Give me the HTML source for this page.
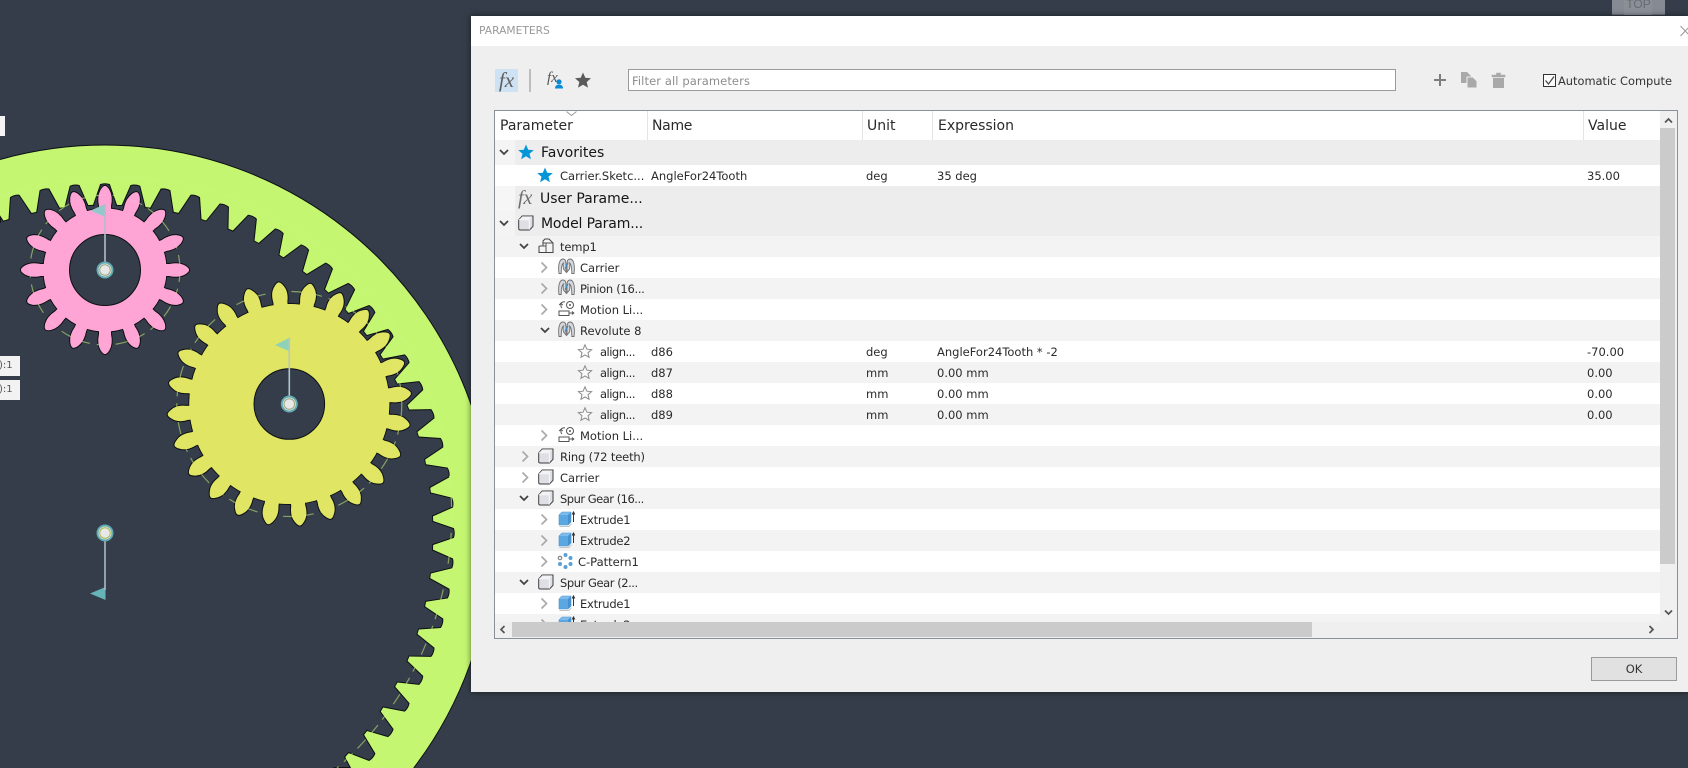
<!DOCTYPE html>
<html><head><meta charset="utf-8"><title>Parameters</title>
<style>
html,body{margin:0;padding:0;width:1688px;height:768px;overflow:hidden;background:#343d49}
body{position:relative;font-family:"DejaVu Sans","Liberation Sans",sans-serif;color:#2a2a2a}
.a{position:absolute}
#scene{position:absolute;left:0;top:0}
.lab{position:absolute;background:#f2f2f2;color:#555;font-size:10px;line-height:20px;white-space:nowrap;overflow:hidden}
#dlg{position:absolute;left:471px;top:16px;width:1217px;height:676px;background:#efefef;box-shadow:0 0 6px rgba(0,0,0,.55)}
#title{position:absolute;left:0;top:0;width:100%;height:30px;background:#fff}
.abs{position:absolute}
.r{position:absolute;left:495px;width:1165px;height:21px}
.w{background:#fff}.g{background:#f3f3f3}.h{background:#ededed;left:515px;width:1145px}
.t{position:absolute;font-size:11.5px;line-height:21px;white-space:nowrap;color:#2a2a2a;margin-top:1px}
.b{font-size:14px;line-height:25px;color:#151515;margin-top:1px}
.hd{position:absolute;font-size:14px;line-height:29px;top:112px;color:#2a2a2a}
.sep{position:absolute;top:111px;width:1px;height:29px;background:#e4e4e4}
.i{position:absolute;overflow:visible}
.dl{mix-blend-mode:lighten}
</style></head><body>

<svg id="scene" width="1688" height="768" viewBox="0 0 1688 768">
<defs>
<path id="n" d="M318,-13 L328,-11.5 L348.5,-4.5 Q350,0 348.5,4.5 L328,11.5 L318,13Z" fill="#343d49" stroke="#0c0f12" stroke-width="1"/>
<g id="n6"><use href="#n"/><use href="#n" transform="rotate(5)"/><use href="#n" transform="rotate(10)"/><use href="#n" transform="rotate(15)"/><use href="#n" transform="rotate(20)"/><use href="#n" transform="rotate(25)"/></g>
<path id="pt" d="M58,-6.5 L64,-6.5 C70,-7.8 76,-7.4 80.5,-4.8 Q84.6,-2.2 84.6,0 Q84.6,2.2 80.5,4.8 C76,7.4 70,7.8 64,6.5 L58,6.5Z" fill="#ffa5d6" stroke="#0c0f12" stroke-width="1"/>
<path id="yt" d="M95,-7.5 L102,-7.5 C108,-8.8 114,-8.4 118.5,-5 Q122.6,-2.2 122.6,0 Q122.6,2.2 118.5,5 C114,8.4 108,8.8 102,7.5 L95,7.5Z" fill="#e0e563" stroke="#0c0f12" stroke-width="1"/>
</defs>

<!-- ring gear -->
<g transform="translate(105 533)">
<path d="M-105,-373.5 A388 388 0 0 1 308.7,235 L-105,235Z" fill="#c4f672"/>
<path d="M-105,-373.5 A388 388 0 0 1 308.7,235" fill="none" stroke="#0c0f12" stroke-width="1"/>
<path d="M-105,-310.7 A328 328 0 0 1 228.8,235 L-105,235Z" fill="#343d49" stroke="none"/>
<path d="M-105,-310.7 A328 328 0 0 1 228.8,235" fill="none" stroke="#0c0f12" stroke-width="1"/>
<use href="#n6" transform="rotate(-105)"/><use href="#n6" transform="rotate(-75)"/><use href="#n6" transform="rotate(-45)"/><use href="#n6" transform="rotate(-15)"/><use href="#n6" transform="rotate(15)"/>
<path d="M234,215.7 L239.7,224.1 L245.3,234.6 L217.2,234.6 L215.7,234Z" fill="#343d49" stroke="#0c0f12" stroke-width="1"/>
<path d="M-104.6,-316.1 L-101.9,-312.1 L-96.6,-303.3 L-104.6,-303.3Z" fill="#343d49" stroke="#0c0f12" stroke-width="1"/>
<path d="M-105,-310.1 A327.4 327.4 0 0 1 228,235 L-105,235Z" fill="#343d49"/>
</g>

<!-- pink pinion -->
<g transform="translate(105 270)">
<circle r="62" fill="#ffa5d6" stroke="#0c0f12" stroke-width="1"/>
<use href="#pt"/><use href="#pt" transform="rotate(22.5)"/><use href="#pt" transform="rotate(45)"/><use href="#pt" transform="rotate(67.5)"/><use href="#pt" transform="rotate(90)"/><use href="#pt" transform="rotate(112.5)"/><use href="#pt" transform="rotate(135)"/><use href="#pt" transform="rotate(157.5)"/><use href="#pt" transform="rotate(180)"/><use href="#pt" transform="rotate(202.5)"/><use href="#pt" transform="rotate(225)"/><use href="#pt" transform="rotate(247.5)"/><use href="#pt" transform="rotate(270)"/><use href="#pt" transform="rotate(292.5)"/><use href="#pt" transform="rotate(315)"/><use href="#pt" transform="rotate(337.5)"/>
<circle r="61.5" fill="#ffa5d6"/>
<circle r="35.5" fill="#343d49" stroke="#0c0f12" stroke-width="1"/>
</g>

<!-- yellow planet -->
<g transform="translate(289.3 404)">
<circle r="100.5" fill="#e0e563" stroke="#0c0f12" stroke-width="1"/>
<g transform="rotate(10)">
<use href="#yt"/><use href="#yt" transform="rotate(15)"/><use href="#yt" transform="rotate(30)"/><use href="#yt" transform="rotate(45)"/><use href="#yt" transform="rotate(60)"/><use href="#yt" transform="rotate(75)"/><use href="#yt" transform="rotate(90)"/><use href="#yt" transform="rotate(105)"/><use href="#yt" transform="rotate(120)"/><use href="#yt" transform="rotate(135)"/><use href="#yt" transform="rotate(150)"/><use href="#yt" transform="rotate(165)"/><use href="#yt" transform="rotate(180)"/><use href="#yt" transform="rotate(195)"/><use href="#yt" transform="rotate(210)"/><use href="#yt" transform="rotate(225)"/><use href="#yt" transform="rotate(240)"/><use href="#yt" transform="rotate(255)"/><use href="#yt" transform="rotate(270)"/><use href="#yt" transform="rotate(285)"/><use href="#yt" transform="rotate(300)"/><use href="#yt" transform="rotate(315)"/><use href="#yt" transform="rotate(330)"/><use href="#yt" transform="rotate(345)"/>
</g>
<circle r="100" fill="#e0e563"/>
<circle r="35.3" fill="#343d49" stroke="#0c0f12" stroke-width="1"/>
</g>

<!-- dashed pitch circles -->
<g fill="none" stroke-width="1.2" stroke-dasharray="12 7">
<g class="dl" stroke="#7d9a58">
<path d="M0,196.9 A337.5 337.5 0 0 1 337,768"/>
<circle cx="105" cy="270" r="75"/>
<circle cx="289.3" cy="404" r="112.5"/>
</g>
<g stroke="#fff" stroke-opacity=".07">
<path d="M0,196.9 A337.5 337.5 0 0 1 337,768"/>
<circle cx="105" cy="270" r="75"/>
<circle cx="289.3" cy="404" r="112.5"/>
</g>
</g>

<!-- joint glyphs -->
<g>
<path d="M90.5,210.5 L105.5,204 V217Z" fill="#92c7cc"/>
<line x1="105" y1="262" x2="105" y2="205" stroke="#aebfca" stroke-width="1.6"/>
<circle cx="105" cy="270" r="7.5" fill="#e8e8e8" stroke="#62abb2" stroke-width="2"/>
<circle cx="105" cy="270" r="5.3" fill="#e8e8e8" stroke="#9aa77c" stroke-width="1"/>

<path d="M275,345 L290,337.5 V351.5Z" fill="#8fd2b8"/>
<line x1="289.3" y1="396" x2="289.3" y2="338" stroke="#b5c7c9" stroke-width="1.6"/>
<circle cx="289.3" cy="404" r="7.5" fill="#e8e8e8" stroke="#62abb2" stroke-width="2"/>
<circle cx="289.3" cy="404" r="5.3" fill="#e8e8e8" stroke="#9aa77c" stroke-width="1"/>

<path d="M90,593.5 L105.5,587 V600Z" fill="#67b4b8"/>
<line x1="105" y1="541" x2="105" y2="590" stroke="#a9bcc7" stroke-width="1.6"/>
<circle cx="105" cy="533" r="7.5" fill="#e8e8e8" stroke="#62abb2" stroke-width="2"/>
<circle cx="105" cy="533" r="5.3" fill="#e8e8e8" stroke="#a4b84c" stroke-width="1"/>
</g>

<!-- view cube -->
<rect x="1612" y="0" width="53" height="15" fill="#868b93"/>
<rect x="1612" y="14" width="53" height="1" fill="#6f747c"/>
<rect x="1624" y="0" width="28" height="15" fill="#8b9097"/>
<text x="1638.5" y="8" font-family="Liberation Sans,sans-serif" font-size="12" fill="#656a72" text-anchor="middle">TOP</text>
</svg>

<div class="lab" style="left:0;top:116px;width:5px;height:20px;background:#f4f4f4"></div>
<div class="lab" style="left:0;top:356px;width:20px;height:20px"><span class="abs" style="left:-1px">):1</span></div>
<div class="lab" style="left:0;top:380px;width:20px;height:20px"><span class="abs" style="left:-1px">):1</span></div>

<div id="dlg"><div id="title"></div></div>

<!-- title -->
<div class="a" style="left:479px;top:20px;font-family:'DejaVu Sans',sans-serif;font-size:10.7px;line-height:22px;color:#999">PARAMETERS</div>
<svg class="i" style="left:1680px;top:24px;overflow:hidden" width="8" height="14"><path d="M0.5,2 L10,12 M10,2 L0.5,12" stroke="#999" stroke-width="1" fill="none"/></svg>

<!-- toolbar -->
<div class="a" style="left:495px;top:69px;width:23px;height:23px;background:#cfe2f3"></div>
<div class="a" style="left:495px;top:68px;width:23px;text-align:center;font:italic 21px/24px 'Liberation Serif',serif;color:#5e5e5e">fx</div>
<div class="a" style="left:529px;top:69px;width:2px;height:23px;background:#bdbdbd"></div>
<div class="a" style="left:547px;top:70px;font:italic 15px/16px 'Liberation Serif',serif;color:#555">fx</div>
<svg class="i" style="left:554px;top:79px" width="11" height="10"><circle cx="5" cy="2.8" r="2.6" fill="#0b8ad8"/><path d="M1,9.5 Q1,5.6 5,5.6 Q9,5.6 9,9.5Z" fill="#0b8ad8"/></svg>
<svg class="i" style="left:574px;top:71px" width="18" height="18" viewBox="0 0 18 18"><path d="M9,1.5 L11.3,6.8 L17,7.3 L12.7,11 L14,16.6 L9,13.7 L4,16.6 L5.3,11 L1,7.3 L6.7,6.8Z" fill="#5b5b5b"/></svg>

<div class="a" style="left:628px;top:69px;width:766px;height:20px;background:#fff;border:1px solid #9a9a9a"></div>
<div class="a" style="left:632px;top:71px;font-size:11.5px;line-height:21px;color:#8d8d8d;letter-spacing:.1px">Filter all parameters</div>

<svg class="i" style="left:1434px;top:74px" width="13" height="13"><path d="M6,0 V12 M0,6 H12" stroke="#7d7d7d" stroke-width="2" fill="none"/></svg>
<svg class="i" style="left:1461px;top:72px" width="17" height="17"><path d="M0,0 H6 L10,4 V11 H0Z" fill="#a9a9a9"/><path d="M6,5 H12 L16,9 V16 H6Z" fill="#a9a9a9" stroke="#efefef" stroke-width="1"/></svg>
<svg class="i" style="left:1492px;top:72px" width="14" height="17"><path d="M0,3 H13 V5 H0Z M4.5,3 V1 H8.5 V3" fill="#a9a9a9" stroke="#a9a9a9" stroke-width=".6"/><path d="M1,6 H12 V16 H1Z" fill="#a9a9a9"/></svg>

<svg class="i" style="left:1543px;top:74px" width="14" height="14"><rect x=".5" y=".5" width="12" height="12" fill="#fbfbfb" stroke="#333"/><path d="M2.5,6.5 L5.5,10 L11,2.5" stroke="#444" stroke-width="1.2" fill="none"/></svg>
<div class="t" style="left:1558px;top:70px;color:#333;font-size:11.4px">Automatic Compute</div>

<!-- table -->
<div class="a" style="left:494px;top:110px;width:1182px;height:527px;border:1px solid #8b8f96;background:#efefef"></div>
<div class="a" style="left:495px;top:111px;width:1165px;height:29px;background:#fff"></div>
<div class="sep" style="left:647px"></div><div class="sep" style="left:862px"></div><div class="sep" style="left:932px"></div><div class="sep" style="left:1583px"></div>
<svg class="i" style="left:566px;top:111px" width="11" height="6"><path d="M0.5,0.5 L5.5,4.5 L10.5,0.5" stroke="#999" fill="none"/></svg>
<div class="hd" style="left:500px">Parameter</div>
<div class="hd" style="left:652px;letter-spacing:-.3px">Name</div>
<div class="hd" style="left:867px">Unit</div>
<div class="hd" style="left:938px">Expression</div>
<div class="hd" style="left:1588px">Value</div>

<div class="a" style="left:495px;top:140px;width:1165px;height:482px;overflow:hidden;background:#fff">
<div class="a" style="left:-495px;top:-140px;width:1688px;height:768px">

<div class="a" style="left:495px;top:140px;width:20px;height:96px;background:#f4f4f4"></div>
<div class="r h" style="top:140px;height:25px"></div>
<div class="r w" style="top:165px"></div>
<div class="a" style="left:495px;top:186px;width:20px;height:25px;background:#f6f6f6"></div>
<div class="r h" style="top:186px;height:25px"></div>
<div class="r h" style="top:211px;height:25px"></div>

<div class="r g" style="top:236px"></div><div class="r w" style="top:257px"></div><div class="r g" style="top:278px"></div><div class="r w" style="top:299px"></div><div class="r g" style="top:320px"></div><div class="r w" style="top:341px"></div><div class="r g" style="top:362px"></div><div class="r w" style="top:383px"></div><div class="r g" style="top:404px"></div><div class="r w" style="top:425px"></div><div class="r g" style="top:446px"></div><div class="r w" style="top:467px"></div><div class="r g" style="top:488px"></div><div class="r w" style="top:509px"></div><div class="r g" style="top:530px"></div><div class="r w" style="top:551px"></div><div class="r g" style="top:572px"></div><div class="r w" style="top:593px"></div><div class="r g" style="top:614px"></div>

<svg width="0" height="0" style="position:absolute"><defs>
<g id="cd"><path d="M1,2 L5,6 L9,2" stroke="#444" stroke-width="1.8" fill="none"/></g>
<g id="cr"><path d="M1.5,0.5 L6.5,5.5 L1.5,10.5" stroke="#aaa" stroke-width="1.7" fill="none"/></g>
<g id="bs"><path d="M8,0.5 L10.2,5.7 L15.8,6.1 L11.5,9.7 L12.9,15.2 L8,12.3 L3.1,15.2 L4.5,9.7 L0.2,6.1 L5.8,5.7Z" fill="#0696d7"/></g>
<g id="os"><path d="M7,0.8 L8.9,5.2 L13.6,5.6 L10,8.7 L11.1,13.3 L7,10.9 L2.9,13.3 L4,8.7 L0.4,5.6 L5.1,5.2Z" fill="#fafafa" stroke="#8c8c8c" stroke-width="1"/></g>
<g id="cb"><path d="M0.7,5 L4.2,1 H15 V11.3 L11.5,15 H2.2 Q0.7,15 0.7,13.5Z" fill="#dfe0e5" stroke="#3e3e3e" stroke-width="1"/><path d="M0.9,4.7 H11.4 V14.6" fill="none" stroke="#f8f8f8" stroke-width="1"/><path d="M4.4,1.4 H14.4 L11.3,4.4 H1.5Z" fill="#f3f3f5"/></g>
<g id="cm"><path d="M1,14.5 V8.5 Q1,8 2,8 H5 V3 L7,1 H11 L15,5 V14.5 Z" fill="#f4f4f5" stroke="#444" stroke-width="1"/><path d="M1.5,8 H8 V14.5 M8,8 V5 H14.5 M5.5,5 H8" fill="none" stroke="#555" stroke-width="1"/></g>
<g id="jt"><path d="M1,15.5 C0,8 1,1 5,1 C7,1 8,3 8,6 L8,14 L5.5,11 C5,9 5,6 5.5,5 C3.8,6 3.2,10 3.2,15.5Z" fill="#d5d7dc" stroke="#6f6f6f" stroke-width=".9"/><path d="M16,15.5 C17,8 16,1 12,1 C10,1 9,3 9,6 L9,14 L11.5,11 C12,9 12,6 11.5,5 C13.2,6 13.8,10 13.8,15.5Z" fill="#d5d7dc" stroke="#6f6f6f" stroke-width=".9"/><path d="M7,10.5 L10,5" stroke="#2b8bd3" stroke-width="1.2"/></g>
<g id="ml"><circle cx="12" cy="4" r="3.5" fill="none" stroke="#555"/><circle cx="12" cy="4" r="1" fill="#555"/><path d="M4,7 Q2.5,6 3,2.5 Q3.6,0.7 7,0.7 M1.2,4 L2.9,2.2 L4.7,4" fill="none" stroke="#555"/><path d="M1,10 H11 V14.5 H1Z M11,12 H15.5 M14,10.5 L15.8,12 L14,13.5" fill="none" stroke="#555"/></g>
<g id="ex"><path d="M1,15 H10.5 L13.5,12 V13.5 L11,16 H2Z" fill="#c4c4c4"/><path d="M1,4 L4,1 H13 V11 L10,14 H1Z" fill="#5aa7e2" stroke="#4b94cd" stroke-width=".6"/><path d="M10,4 H1.2 L4,1.2 H12.8Z" fill="#7dbbec"/><path d="M10,4 V13.8 L12.8,11 V1.2Z" fill="#3f86c6" fill-opacity=".65"/><path d="M15.5,11 V2 M14.2,3.5 L15.5,1 L16.8,3.5" stroke="#333" stroke-width="1" fill="none"/></g>
<g id="cp"><circle cx="2" cy="5" r="1.8" fill="#eee" stroke="#777"/><circle cx="7.5" cy="2" r="2" fill="#5a9fd8"/><circle cx="12.5" cy="5" r="2" fill="#5a9fd8"/><circle cx="12.5" cy="11" r="2" fill="#5a9fd8"/><circle cx="7.5" cy="14" r="2" fill="#5a9fd8"/><circle cx="2" cy="11" r="2" fill="#5a9fd8"/></g>
</defs></svg>

<!-- Favorites -->
<svg class="i" style="left:499px;top:148px" width="11" height="9"><use href="#cd"/></svg>
<svg class="i" style="left:518px;top:144px" width="16" height="16"><use href="#bs"/></svg>
<div class="t b" style="left:541px;top:140px">Favorites</div>

<svg class="i" style="left:537px;top:167px" width="16" height="16"><use href="#bs"/></svg>
<div class="t" style="left:560px;top:165px">Carrier.Sketc...</div>
<div class="t" style="left:651px;top:165px">AngleFor24Tooth</div>
<div class="t" style="left:866px;top:165px">deg</div>
<div class="t" style="left:937px;top:165px">35 deg</div>
<div class="t" style="left:1587px;top:165px">35.00</div>

<div class="a" style="left:518px;top:187px;font:italic 20px/23px 'Liberation Serif',serif;color:#6e6e6e">fx</div>
<div class="t b" style="left:540px;top:186px">User Parame...</div>

<svg class="i" style="left:499px;top:219px" width="11" height="9"><use href="#cd"/></svg>
<svg class="i" style="left:518px;top:215px" width="16" height="16"><use href="#cb"/></svg>
<div class="t b" style="left:541px;top:211px;letter-spacing:-.15px">Model Param...</div>

<!-- temp1 -->
<svg class="i" style="left:519px;top:242px" width="11" height="9"><use href="#cd"/></svg>
<svg class="i" style="left:538px;top:238px" width="16" height="16"><use href="#cm"/></svg>
<div class="t" style="left:560px;top:236px;letter-spacing:-.15px">temp1</div>

<svg class="i" style="left:540px;top:262px" width="9" height="12"><use href="#cr"/></svg>
<svg class="i" style="left:558px;top:258px" width="17" height="17"><use href="#jt"/></svg>
<div class="t" style="left:580px;top:257px">Carrier</div>

<svg class="i" style="left:540px;top:283px" width="9" height="12"><use href="#cr"/></svg>
<svg class="i" style="left:558px;top:279px" width="17" height="17"><use href="#jt"/></svg>
<div class="t" style="left:580px;top:278px;letter-spacing:-.3px">Pinion (16...</div>

<svg class="i" style="left:540px;top:304px" width="9" height="12"><use href="#cr"/></svg>
<svg class="i" style="left:558px;top:301px" width="16" height="16"><use href="#ml"/></svg>
<div class="t" style="left:580px;top:299px">Motion Li...</div>

<svg class="i" style="left:540px;top:326px" width="11" height="9"><use href="#cd"/></svg>
<svg class="i" style="left:558px;top:321px" width="17" height="17"><use href="#jt"/></svg>
<div class="t" style="left:580px;top:320px">Revolute 8</div>

<svg class="i" style="left:578px;top:344px" width="14" height="14"><use href="#os"/></svg>
<div class="t" style="left:600px;top:341px;letter-spacing:-.5px">align...</div>
<div class="t" style="left:651px;top:341px">d86</div>
<div class="t" style="left:866px;top:341px">deg</div>
<div class="t" style="left:937px;top:341px">AngleFor24Tooth * -2</div>
<div class="t" style="left:1587px;top:341px">-70.00</div>

<svg class="i" style="left:578px;top:365px" width="14" height="14"><use href="#os"/></svg>
<div class="t" style="left:600px;top:362px;letter-spacing:-.5px">align...</div>
<div class="t" style="left:651px;top:362px">d87</div>
<div class="t" style="left:866px;top:362px">mm</div>
<div class="t" style="left:937px;top:362px">0.00 mm</div>
<div class="t" style="left:1587px;top:362px">0.00</div>

<svg class="i" style="left:578px;top:386px" width="14" height="14"><use href="#os"/></svg>
<div class="t" style="left:600px;top:383px;letter-spacing:-.5px">align...</div>
<div class="t" style="left:651px;top:383px">d88</div>
<div class="t" style="left:866px;top:383px">mm</div>
<div class="t" style="left:937px;top:383px">0.00 mm</div>
<div class="t" style="left:1587px;top:383px">0.00</div>

<svg class="i" style="left:578px;top:407px" width="14" height="14"><use href="#os"/></svg>
<div class="t" style="left:600px;top:404px;letter-spacing:-.5px">align...</div>
<div class="t" style="left:651px;top:404px">d89</div>
<div class="t" style="left:866px;top:404px">mm</div>
<div class="t" style="left:937px;top:404px">0.00 mm</div>
<div class="t" style="left:1587px;top:404px">0.00</div>

<svg class="i" style="left:540px;top:430px" width="9" height="12"><use href="#cr"/></svg>
<svg class="i" style="left:558px;top:427px" width="16" height="16"><use href="#ml"/></svg>
<div class="t" style="left:580px;top:425px">Motion Li...</div>

<svg class="i" style="left:521px;top:451px" width="9" height="12"><use href="#cr"/></svg>
<svg class="i" style="left:538px;top:448px" width="16" height="16"><use href="#cb"/></svg>
<div class="t" style="left:560px;top:446px;letter-spacing:-.15px">Ring (72 teeth)</div>

<svg class="i" style="left:521px;top:472px" width="9" height="12"><use href="#cr"/></svg>
<svg class="i" style="left:538px;top:469px" width="16" height="16"><use href="#cb"/></svg>
<div class="t" style="left:560px;top:467px">Carrier</div>

<svg class="i" style="left:519px;top:494px" width="11" height="9"><use href="#cd"/></svg>
<svg class="i" style="left:538px;top:490px" width="16" height="16"><use href="#cb"/></svg>
<div class="t" style="left:560px;top:488px;letter-spacing:-.5px">Spur Gear (16...</div>

<svg class="i" style="left:540px;top:514px" width="9" height="12"><use href="#cr"/></svg>
<svg class="i" style="left:558px;top:511px" width="17" height="17"><use href="#ex"/></svg>
<div class="t" style="left:580px;top:509px;letter-spacing:-.25px">Extrude1</div>

<svg class="i" style="left:540px;top:535px" width="9" height="12"><use href="#cr"/></svg>
<svg class="i" style="left:558px;top:532px" width="17" height="17"><use href="#ex"/></svg>
<div class="t" style="left:580px;top:530px;letter-spacing:-.25px">Extrude2</div>

<svg class="i" style="left:540px;top:556px" width="9" height="12"><use href="#cr"/></svg>
<svg class="i" style="left:558px;top:553px" width="16" height="16"><use href="#cp"/></svg>
<div class="t" style="left:578px;top:551px">C-Pattern1</div>

<svg class="i" style="left:519px;top:578px" width="11" height="9"><use href="#cd"/></svg>
<svg class="i" style="left:538px;top:574px" width="16" height="16"><use href="#cb"/></svg>
<div class="t" style="left:560px;top:572px;letter-spacing:-.45px">Spur Gear (2...</div>

<svg class="i" style="left:540px;top:598px" width="9" height="12"><use href="#cr"/></svg>
<svg class="i" style="left:558px;top:595px" width="17" height="17"><use href="#ex"/></svg>
<div class="t" style="left:580px;top:593px;letter-spacing:-.25px">Extrude1</div>

<svg class="i" style="left:540px;top:619px" width="9" height="12"><use href="#cr"/></svg>
<svg class="i" style="left:558px;top:616px" width="17" height="17"><use href="#ex"/></svg>
<div class="t" style="left:580px;top:614px;letter-spacing:-.25px">Extrude2</div>
</div></div>

<!-- scrollbars -->
<div class="a" style="left:1660px;top:111px;width:16px;height:511px;background:#f0f0f0"></div>
<div class="a" style="left:1660px;top:128px;width:15px;height:436px;background:#cbcbcb"></div>
<svg class="i" style="left:1664px;top:117px" width="9" height="7"><path d="M1,5.5 L4.5,2 L8,5.5" stroke="#555" stroke-width="1.7" fill="none"/></svg>
<svg class="i" style="left:1664px;top:609px" width="9" height="7"><path d="M1,1.5 L4.5,5 L8,1.5" stroke="#555" stroke-width="1.7" fill="none"/></svg>
<div class="a" style="left:495px;top:622px;width:1181px;height:15px;background:#efefef"></div>
<div class="a" style="left:512px;top:622px;width:800px;height:15px;background:#cbcbcb"></div>
<svg class="i" style="left:499px;top:625px" width="7" height="9"><path d="M5.5,1 L2,4.5 L5.5,8" stroke="#555" stroke-width="1.7" fill="none"/></svg>
<svg class="i" style="left:1648px;top:625px" width="7" height="9"><path d="M1.5,1 L5,4.5 L1.5,8" stroke="#555" stroke-width="1.7" fill="none"/></svg>

<!-- OK -->
<div class="a" style="left:1591px;top:657px;width:84px;height:22px;background:#e1e1e1;border:1px solid #9a9a9a;text-align:center;font-size:11.5px;line-height:22px;color:#333">OK</div>

</body></html>
